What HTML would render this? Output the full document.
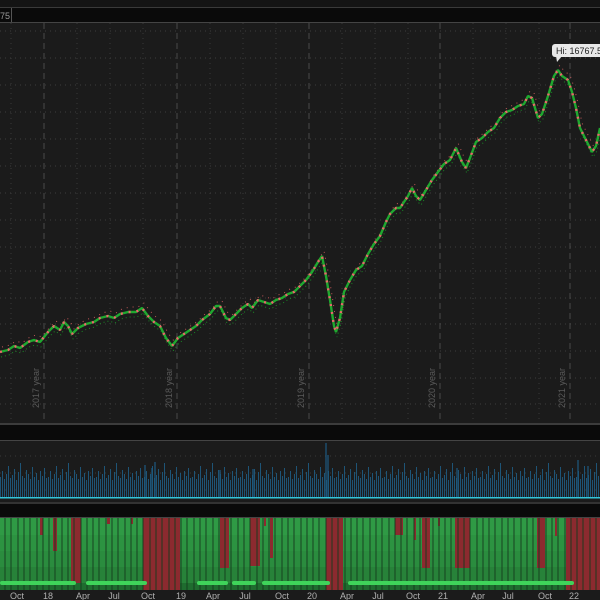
<!DOCTYPE html>
<html><head><meta charset="utf-8"><style>
html,body{margin:0;padding:0;background:#1b1b1b;width:600px;height:600px;overflow:hidden;font-family:"Liberation Sans",sans-serif}
</style></head><body>
<svg width="600" height="600" xmlns="http://www.w3.org/2000/svg" style="display:block">
<defs>
<pattern id="vp" x="0" y="441" width="48" height="60" patternUnits="userSpaceOnUse">
<g stroke="#1d5a80" stroke-width="0.9">
<line x1="0.5" y1="36" x2="0.5" y2="60"/><line x1="2.5" y1="30" x2="2.5" y2="60"/><line x1="4.5" y1="38" x2="4.5" y2="60"/><line x1="6.5" y1="33" x2="6.5" y2="60"/><line x1="8.5" y1="25" x2="8.5" y2="60"/><line x1="10.5" y1="37" x2="10.5" y2="60"/><line x1="12.5" y1="34" x2="12.5" y2="60"/><line x1="14.5" y1="28" x2="14.5" y2="60"/><line x1="16.5" y1="39" x2="16.5" y2="60"/><line x1="18.5" y1="31" x2="18.5" y2="60"/><line x1="20.5" y1="22" x2="20.5" y2="60"/><line x1="22.5" y1="35" x2="22.5" y2="60"/><line x1="24.5" y1="37" x2="24.5" y2="60"/><line x1="26.5" y1="29" x2="26.5" y2="60"/><line x1="28.5" y1="33" x2="28.5" y2="60"/><line x1="30.5" y1="38" x2="30.5" y2="60"/><line x1="32.5" y1="26" x2="32.5" y2="60"/><line x1="34.5" y1="36" x2="34.5" y2="60"/><line x1="36.5" y1="32" x2="36.5" y2="60"/><line x1="38.5" y1="39" x2="38.5" y2="60"/><line x1="40.5" y1="30" x2="40.5" y2="60"/><line x1="42.5" y1="35" x2="42.5" y2="60"/><line x1="44.5" y1="27" x2="44.5" y2="60"/><line x1="46.5" y1="37" x2="46.5" y2="60"/>
</g>
</pattern>
</defs>
<rect width="600" height="600" fill="#1b1b1b"/>
<rect x="0" y="0" width="600" height="7" fill="#141414"/>
<rect x="0" y="7" width="600" height="1" fill="#3a3a3a"/>
<rect x="0" y="8" width="600" height="14" fill="#0a0a0a"/>
<text x="0" y="19" fill="#9a9a9a" font-size="9">75</text>
<rect x="11" y="8" width="1" height="14" fill="#555"/>
<rect x="0" y="22" width="600" height="1" fill="#444"/>
<g stroke="#3e3e3e" stroke-dasharray="1 4">
<line x1="0" x2="600" y1="31" y2="31"/><line x1="0" x2="600" y1="58" y2="58"/><line x1="0" x2="600" y1="85" y2="85"/><line x1="0" x2="600" y1="112" y2="112"/><line x1="0" x2="600" y1="139" y2="139"/><line x1="0" x2="600" y1="166" y2="166"/><line x1="0" x2="600" y1="193" y2="193"/><line x1="0" x2="600" y1="220" y2="220"/><line x1="0" x2="600" y1="247" y2="247"/><line x1="0" x2="600" y1="271" y2="271"/><line x1="0" x2="600" y1="298" y2="298"/><line x1="0" x2="600" y1="324" y2="324"/><line x1="0" x2="600" y1="351" y2="351"/><line x1="0" x2="600" y1="378" y2="378"/><line x1="0" x2="600" y1="404" y2="404"/>
</g>
<g stroke="#3a3a3a" stroke-dasharray="1 4">
<line x1="11" x2="11" y1="23" y2="423"/><line x1="77" x2="77" y1="23" y2="423"/><line x1="110" x2="110" y1="23" y2="423"/><line x1="143" x2="143" y1="23" y2="423"/><line x1="210" x2="210" y1="23" y2="423"/><line x1="243" x2="243" y1="23" y2="423"/><line x1="276" x2="276" y1="23" y2="423"/><line x1="342" x2="342" y1="23" y2="423"/><line x1="375" x2="375" y1="23" y2="423"/><line x1="408" x2="408" y1="23" y2="423"/><line x1="473" x2="473" y1="23" y2="423"/><line x1="506" x2="506" y1="23" y2="423"/><line x1="539" x2="539" y1="23" y2="423"/>
</g>
<g stroke="#4a4a4a" stroke-dasharray="6 4">
<line x1="44" x2="44" y1="23" y2="423"/><line x1="177" x2="177" y1="23" y2="423"/><line x1="309" x2="309" y1="23" y2="423"/><line x1="440" x2="440" y1="23" y2="423"/><line x1="570" x2="570" y1="23" y2="423"/>
</g>
<g fill="#5a5a5a" font-size="9">
<text transform="translate(39,408) rotate(-90)">2017 year</text>
<text transform="translate(172,408) rotate(-90)">2018 year</text>
<text transform="translate(304,408) rotate(-90)">2019 year</text>
<text transform="translate(435,408) rotate(-90)">2020 year</text>
<text transform="translate(565,408) rotate(-90)">2021 year</text>
</g>
<g fill="none" stroke-linejoin="bevel">
<polyline transform="translate(1,5)" stroke="#1a8a26" stroke-width="1" stroke-dasharray="1 3" points="0,352 8,350 14,346 20,348 28,342 34,340 40,342 48,332 54,326 60,330 64,322 68,326 72,334 78,328 86,324 94,322 100,318 108,316 114,318 120,314 128,312 136,312 142,308 148,316 154,322 160,326 166,338 172,346 178,338 184,334 190,330 196,326 202,320 210,314 216,306 220,306 226,318 230,320 236,314 242,308 248,304 252,308 258,300 264,302 270,304 276,300 282,298 288,294 294,292 300,286 306,280 312,272 318,262 322,256 326,276 330,300 334,326 336,332 340,318 344,292 350,280 356,270 362,266 368,254 374,244 380,236 386,222 390,214 396,208 400,208 404,202 408,196 412,188 416,196 420,200 426,190 432,180 438,172 444,164 450,160 456,148 462,162 466,168 470,158 476,142 482,138 488,132 494,128 500,118 506,112 512,110 518,106 524,104 528,96 532,98 538,118 542,114 548,96 554,76 558,70 562,76 568,80 572,92 576,108 580,128 586,140 592,152 596,146 600,128"/>
<polyline transform="translate(2,-5)" stroke="#c05858" stroke-width="1" stroke-dasharray="1 5" points="0,352 8,350 14,346 20,348 28,342 34,340 40,342 48,332 54,326 60,330 64,322 68,326 72,334 78,328 86,324 94,322 100,318 108,316 114,318 120,314 128,312 136,312 142,308 148,316 154,322 160,326 166,338 172,346 178,338 184,334 190,330 196,326 202,320 210,314 216,306 220,306 226,318 230,320 236,314 242,308 248,304 252,308 258,300 264,302 270,304 276,300 282,298 288,294 294,292 300,286 306,280 312,272 318,262 322,256 326,276 330,300 334,326 336,332 340,318 344,292 350,280 356,270 362,266 368,254 374,244 380,236 386,222 390,214 396,208 400,208 404,202 408,196 412,188 416,196 420,200 426,190 432,180 438,172 444,164 450,160 456,148 462,162 466,168 470,158 476,142 482,138 488,132 494,128 500,118 506,112 512,110 518,106 524,104 528,96 532,98 538,118 542,114 548,96 554,76 558,70 562,76 568,80 572,92 576,108 580,128 586,140 592,152 596,146 600,128"/>
<polyline stroke="#1fa82f" stroke-width="2.4" points="0,352 8,350 14,346 20,348 28,342 34,340 40,342 48,332 54,326 60,330 64,322 68,326 72,334 78,328 86,324 94,322 100,318 108,316 114,318 120,314 128,312 136,312 142,308 148,316 154,322 160,326 166,338 172,346 178,338 184,334 190,330 196,326 202,320 210,314 216,306 220,306 226,318 230,320 236,314 242,308 248,304 252,308 258,300 264,302 270,304 276,300 282,298 288,294 294,292 300,286 306,280 312,272 318,262 322,256 326,276 330,300 334,326 336,332 340,318 344,292 350,280 356,270 362,266 368,254 374,244 380,236 386,222 390,214 396,208 400,208 404,202 408,196 412,188 416,196 420,200 426,190 432,180 438,172 444,164 450,160 456,148 462,162 466,168 470,158 476,142 482,138 488,132 494,128 500,118 506,112 512,110 518,106 524,104 528,96 532,98 538,118 542,114 548,96 554,76 558,70 562,76 568,80 572,92 576,108 580,128 586,140 592,152 596,146 600,128"/>
<polyline stroke="#e86a6a" stroke-width="2.4" stroke-dasharray="2 6" points="0,352 8,350 14,346 20,348 28,342 34,340 40,342 48,332 54,326 60,330 64,322 68,326 72,334 78,328 86,324 94,322 100,318 108,316 114,318 120,314 128,312 136,312 142,308 148,316 154,322 160,326 166,338 172,346 178,338 184,334 190,330 196,326 202,320 210,314 216,306 220,306 226,318 230,320 236,314 242,308 248,304 252,308 258,300 264,302 270,304 276,300 282,298 288,294 294,292 300,286 306,280 312,272 318,262 322,256 326,276 330,300 334,326 336,332 340,318 344,292 350,280 356,270 362,266 368,254 374,244 380,236 386,222 390,214 396,208 400,208 404,202 408,196 412,188 416,196 420,200 426,190 432,180 438,172 444,164 450,160 456,148 462,162 466,168 470,158 476,142 482,138 488,132 494,128 500,118 506,112 512,110 518,106 524,104 528,96 532,98 538,118 542,114 548,96 554,76 558,70 562,76 568,80 572,92 576,108 580,128 586,140 592,152 596,146 600,128"/>
</g>
<rect x="0" y="423" width="600" height="2" fill="#3c3c3c"/>
<rect x="0" y="425" width="600" height="15" fill="#0a0a0a"/>
<rect x="0" y="440" width="600" height="1" fill="#444"/>
<g stroke="#3a3a3a" stroke-dasharray="1 4">
<line x1="0" x2="600" y1="456" y2="456"/><line x1="0" x2="600" y1="473" y2="473"/><line x1="0" x2="600" y1="490" y2="490"/>
</g>
<rect x="0" y="441" width="600" height="57" fill="url(#vp)"/>
<g stroke="#1d5a80" stroke-width="1.2">
<line x1="326" x2="326" y1="443" y2="498"/><line x1="328" x2="328" y1="455" y2="498"/><line x1="145" x2="145" y1="465" y2="498"/><line x1="152" x2="152" y1="468" y2="498"/><line x1="155" x2="155" y1="462" y2="498"/><line x1="220" x2="220" y1="470" y2="498"/><line x1="253" x2="253" y1="469" y2="498"/><line x1="457" x2="457" y1="468" y2="498"/><line x1="578" x2="578" y1="460" y2="498"/><line x1="588" x2="588" y1="466" y2="498"/>
</g>
<rect x="0" y="497" width="600" height="1.5" fill="#33c5d8"/>
<rect x="0" y="502" width="600" height="2" fill="#333"/>
<rect x="0" y="504" width="600" height="13" fill="#0a0a0a"/>
<rect x="0" y="517" width="600" height="1" fill="#444"/>
<rect x="0" y="518" width="600" height="17" fill="#2f9a45"/>
<rect x="0" y="535" width="600" height="16" fill="#2c9341"/>
<rect x="0" y="551" width="600" height="16" fill="#2a8c3e"/>
<rect x="0" y="567" width="600" height="16" fill="#278239"/>
<rect x="0" y="583" width="600" height="7" fill="#1f6c2f"/>
<g fill="#8c2a2f">
<rect x="40" y="518" width="3" height="17"/><rect x="53" y="518" width="4" height="33"/><rect x="71" y="518" width="10" height="65"/><rect x="107" y="518" width="3" height="6"/><rect x="131" y="518" width="2" height="6"/><rect x="143" y="518" width="37" height="72"/><rect x="220" y="518" width="9" height="50"/><rect x="250" y="518" width="10" height="48"/><rect x="264" y="518" width="2" height="8"/><rect x="270" y="518" width="3" height="40"/><rect x="326" y="518" width="17" height="72"/><rect x="395" y="518" width="8" height="17"/><rect x="414" y="518" width="2" height="22"/><rect x="422" y="518" width="8" height="50"/><rect x="438" y="518" width="2" height="8"/><rect x="455" y="518" width="15" height="50"/><rect x="537" y="518" width="8" height="50"/><rect x="555" y="518" width="2" height="18"/><rect x="566" y="518" width="34" height="72"/>
</g>
<g stroke="#163a1e" stroke-width="0.9">
<line x1="5" x2="5" y1="518" y2="590"/><line x1="11" x2="11" y1="518" y2="590"/><line x1="18" x2="18" y1="518" y2="590"/><line x1="24" x2="24" y1="518" y2="590"/><line x1="30" x2="30" y1="518" y2="590"/><line x1="37" x2="37" y1="518" y2="590"/><line x1="43" x2="43" y1="518" y2="590"/><line x1="49" x2="49" y1="518" y2="590"/><line x1="55" x2="55" y1="518" y2="590"/><line x1="62" x2="62" y1="518" y2="590"/><line x1="68" x2="68" y1="518" y2="590"/><line x1="74" x2="74" y1="518" y2="590"/><line x1="81" x2="81" y1="518" y2="590"/><line x1="87" x2="87" y1="518" y2="590"/><line x1="93" x2="93" y1="518" y2="590"/><line x1="99" x2="99" y1="518" y2="590"/><line x1="106" x2="106" y1="518" y2="590"/><line x1="112" x2="112" y1="518" y2="590"/><line x1="118" x2="118" y1="518" y2="590"/><line x1="125" x2="125" y1="518" y2="590"/><line x1="131" x2="131" y1="518" y2="590"/><line x1="137" x2="137" y1="518" y2="590"/><line x1="143" x2="143" y1="518" y2="590"/><line x1="150" x2="150" y1="518" y2="590"/><line x1="156" x2="156" y1="518" y2="590"/><line x1="162" x2="162" y1="518" y2="590"/><line x1="169" x2="169" y1="518" y2="590"/><line x1="175" x2="175" y1="518" y2="590"/><line x1="181" x2="181" y1="518" y2="590"/><line x1="187" x2="187" y1="518" y2="590"/><line x1="194" x2="194" y1="518" y2="590"/><line x1="200" x2="200" y1="518" y2="590"/><line x1="206" x2="206" y1="518" y2="590"/><line x1="213" x2="213" y1="518" y2="590"/><line x1="219" x2="219" y1="518" y2="590"/><line x1="225" x2="225" y1="518" y2="590"/><line x1="231" x2="231" y1="518" y2="590"/><line x1="238" x2="238" y1="518" y2="590"/><line x1="244" x2="244" y1="518" y2="590"/><line x1="250" x2="250" y1="518" y2="590"/><line x1="257" x2="257" y1="518" y2="590"/><line x1="263" x2="263" y1="518" y2="590"/><line x1="269" x2="269" y1="518" y2="590"/><line x1="275" x2="275" y1="518" y2="590"/><line x1="282" x2="282" y1="518" y2="590"/><line x1="288" x2="288" y1="518" y2="590"/><line x1="294" x2="294" y1="518" y2="590"/><line x1="301" x2="301" y1="518" y2="590"/><line x1="307" x2="307" y1="518" y2="590"/><line x1="313" x2="313" y1="518" y2="590"/><line x1="319" x2="319" y1="518" y2="590"/><line x1="326" x2="326" y1="518" y2="590"/><line x1="332" x2="332" y1="518" y2="590"/><line x1="338" x2="338" y1="518" y2="590"/><line x1="345" x2="345" y1="518" y2="590"/><line x1="351" x2="351" y1="518" y2="590"/><line x1="357" x2="357" y1="518" y2="590"/><line x1="363" x2="363" y1="518" y2="590"/><line x1="370" x2="370" y1="518" y2="590"/><line x1="376" x2="376" y1="518" y2="590"/><line x1="382" x2="382" y1="518" y2="590"/><line x1="389" x2="389" y1="518" y2="590"/><line x1="395" x2="395" y1="518" y2="590"/><line x1="401" x2="401" y1="518" y2="590"/><line x1="407" x2="407" y1="518" y2="590"/><line x1="414" x2="414" y1="518" y2="590"/><line x1="420" x2="420" y1="518" y2="590"/><line x1="426" x2="426" y1="518" y2="590"/><line x1="433" x2="433" y1="518" y2="590"/><line x1="439" x2="439" y1="518" y2="590"/><line x1="445" x2="445" y1="518" y2="590"/><line x1="451" x2="451" y1="518" y2="590"/><line x1="458" x2="458" y1="518" y2="590"/><line x1="464" x2="464" y1="518" y2="590"/><line x1="470" x2="470" y1="518" y2="590"/><line x1="477" x2="477" y1="518" y2="590"/><line x1="483" x2="483" y1="518" y2="590"/><line x1="489" x2="489" y1="518" y2="590"/><line x1="495" x2="495" y1="518" y2="590"/><line x1="502" x2="502" y1="518" y2="590"/><line x1="508" x2="508" y1="518" y2="590"/><line x1="514" x2="514" y1="518" y2="590"/><line x1="521" x2="521" y1="518" y2="590"/><line x1="527" x2="527" y1="518" y2="590"/><line x1="533" x2="533" y1="518" y2="590"/><line x1="539" x2="539" y1="518" y2="590"/><line x1="546" x2="546" y1="518" y2="590"/><line x1="552" x2="552" y1="518" y2="590"/><line x1="558" x2="558" y1="518" y2="590"/><line x1="565" x2="565" y1="518" y2="590"/><line x1="571" x2="571" y1="518" y2="590"/><line x1="577" x2="577" y1="518" y2="590"/><line x1="583" x2="583" y1="518" y2="590"/><line x1="590" x2="590" y1="518" y2="590"/><line x1="596" x2="596" y1="518" y2="590"/>
</g>
<g fill="#3fd45a">
<rect x="0" y="581" width="76" height="4" rx="2"/><rect x="86" y="581" width="61" height="4" rx="2"/><rect x="197" y="581" width="31" height="4" rx="2"/><rect x="232" y="581" width="24" height="4" rx="2"/><rect x="262" y="581" width="68" height="4" rx="2"/><rect x="348" y="581" width="226" height="4" rx="2"/>
</g>
<rect x="0" y="590" width="600" height="10" fill="#1b1b1b"/>
<g fill="#b0b0b0" font-size="9" text-anchor="middle">
<text x="17" y="599">Oct</text><text x="48" y="599">18</text><text x="83" y="599">Apr</text><text x="114" y="599">Jul</text><text x="148" y="599">Oct</text><text x="181" y="599">19</text><text x="213" y="599">Apr</text><text x="245" y="599">Jul</text><text x="282" y="599">Oct</text><text x="312" y="599">20</text><text x="347" y="599">Apr</text><text x="378" y="599">Jul</text><text x="413" y="599">Oct</text><text x="443" y="599">21</text><text x="478" y="599">Apr</text><text x="508" y="599">Jul</text><text x="545" y="599">Oct</text><text x="574" y="599">22</text>
</g>
<rect x="552" y="44" width="52" height="13" rx="3" fill="#e8e8e8"/>
<polygon points="556,56 562,56 557,62" fill="#e8e8e8"/>
<text x="556" y="54" fill="#222" font-size="9">Hi: 16767.5</text>
</svg>
</body></html>
